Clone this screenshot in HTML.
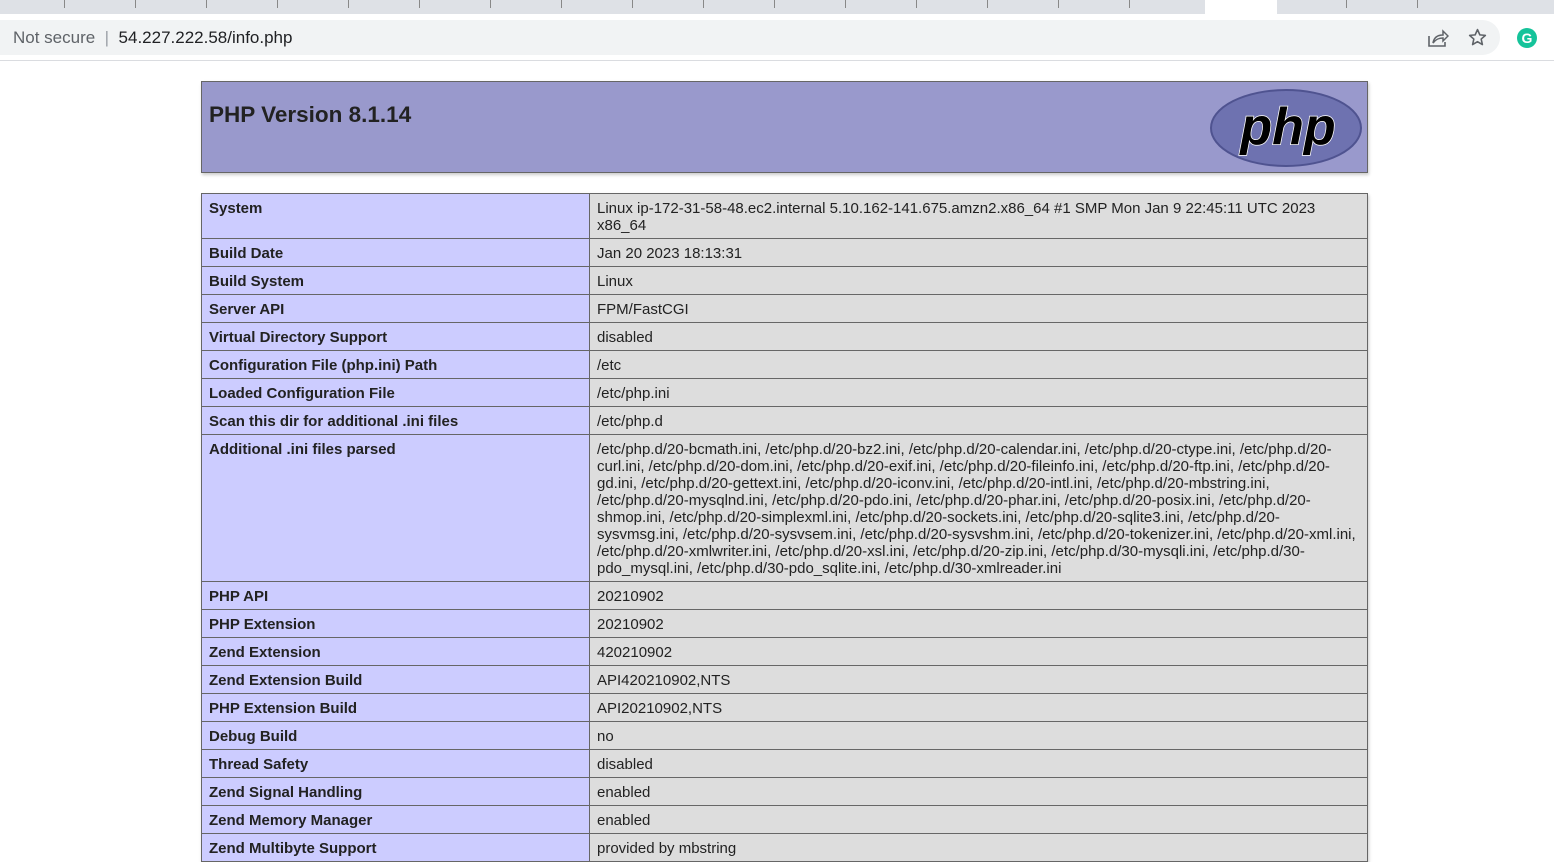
<!DOCTYPE html><html><head><style>
body{margin:0;width:1554px;height:838px;overflow:hidden;background:#fff;font-family:"Liberation Sans",Arial,sans-serif;position:relative}
.tabs{position:absolute;left:0;top:0;width:1554px;height:14px;background:#dee1e6}
.tab{position:absolute;top:0;width:1px;height:8px;background:#888}
.act{position:absolute;left:1205px;top:0;width:72px;height:14px;background:#fff}
.bar{position:absolute;left:0;top:14px;width:1554px;height:46px;background:#fff;border-bottom:1px solid #dadce0}
.omni{position:absolute;left:-20px;top:6px;width:1520px;height:35px;background:#f1f3f4;border-radius:18px}
.url{position:absolute;left:13px;top:14px;font-size:17px;color:#5f6368;line-height:20px}
.url b{font-weight:normal;color:#202124}
.hdr{position:absolute;left:201px;top:81px;width:1165px;height:90px;background:#99c;border:1px solid #666;box-shadow:1px 2px 3px #ccc}
.hdr h1{margin:0;position:absolute;left:7px;top:20px;font-size:22.5px;color:#222}
table{position:absolute;left:201px;top:193px;border-collapse:collapse;width:1167px;box-shadow:1px 2px 3px #ccc}
td{border:1px solid #666;font-size:15px;line-height:17px;padding:6px 7px 4px 7px;vertical-align:baseline;color:#222}
td.e{background:#ccf;width:373px;font-weight:bold}
td.v{background:#ddd}
</style></head><body>
<div class="tabs">
<div class="tab" style="left:64px"></div><div class="tab" style="left:135px"></div><div class="tab" style="left:206px"></div><div class="tab" style="left:277px"></div><div class="tab" style="left:348px"></div><div class="tab" style="left:419px"></div><div class="tab" style="left:490px"></div><div class="tab" style="left:561px"></div><div class="tab" style="left:632px"></div><div class="tab" style="left:703px"></div><div class="tab" style="left:774px"></div><div class="tab" style="left:845px"></div><div class="tab" style="left:916px"></div><div class="tab" style="left:987px"></div><div class="tab" style="left:1058px"></div><div class="tab" style="left:1129px"></div><div class="tab" style="left:1346px"></div><div class="tab" style="left:1417px"></div>
<div class="act"></div></div>
<div class="bar"><div class="omni"></div>
<div class="url">Not secure &nbsp;<span style="color:#9aa0a6">|</span>&nbsp; <b>54.227.222.58/info.php</b></div>
<svg style="position:absolute;left:1427px;top:14px" width="22" height="20" viewBox="0 0 22 20"><path d="M2 8v10h16v-4" fill="none" stroke="#5f6368" stroke-width="1.6"/><path d="M6 15c1-6 5-8 10-8V3l5 5-5 5V10c-4 0-7 1-10 5z" fill="none" stroke="#5f6368" stroke-width="1.5"/></svg>
<svg style="position:absolute;left:1467px;top:13px" width="21" height="21" viewBox="0 0 24 24"><path d="M12 3l2.7 6 6.3.6-4.8 4.2 1.4 6.3L12 16.8 6.4 20.1l1.4-6.3L3 9.6 9.3 9z" fill="none" stroke="#5f6368" stroke-width="1.8" stroke-linejoin="round"/></svg>
<div style="position:absolute;left:1517px;top:14px;width:20px;height:20px;border-radius:50%;background:#15c39a;color:#fff;font-size:14px;font-weight:bold;text-align:center;line-height:20px">G</div>
</div>
<div class="hdr"><h1>PHP Version 8.1.14</h1>
<svg style="position:absolute;left:1008px;top:5px" width="152" height="80" viewBox="0 0 152 80"><ellipse cx="76" cy="41" rx="75" ry="38" fill="#6e72b0" stroke="#4f5390" stroke-width="2"/><text x="78" y="57" text-anchor="middle" font-family="Liberation Sans,sans-serif" font-style="italic" font-weight="bold" font-size="52" fill="#000" stroke="#fff" stroke-width="1.5" paint-order="stroke">php</text></svg>
</div>
<table>
<tr><td class="e">System</td><td class="v">Linux ip-172-31-58-48.ec2.internal 5.10.162-141.675.amzn2.x86_64 #1 SMP Mon Jan 9 22:45:11 UTC 2023 x86_64</td></tr>
<tr><td class="e">Build Date</td><td class="v">Jan 20 2023 18:13:31</td></tr>
<tr><td class="e">Build System</td><td class="v">Linux</td></tr>
<tr><td class="e">Server API</td><td class="v">FPM/FastCGI</td></tr>
<tr><td class="e">Virtual Directory Support</td><td class="v">disabled</td></tr>
<tr><td class="e">Configuration File (php.ini) Path</td><td class="v">/etc</td></tr>
<tr><td class="e">Loaded Configuration File</td><td class="v">/etc/php.ini</td></tr>
<tr><td class="e">Scan this dir for additional .ini files</td><td class="v">/etc/php.d</td></tr>
<tr><td class="e">Additional .ini files parsed</td><td class="v">/etc/php.d/20-bcmath.ini, /etc/php.d/20-bz2.ini, /etc/php.d/20-calendar.ini, /etc/php.d/20-ctype.ini, /etc/php.d/20-curl.ini, /etc/php.d/20-dom.ini, /etc/php.d/20-exif.ini, /etc/php.d/20-fileinfo.ini, /etc/php.d/20-ftp.ini, /etc/php.d/20-gd.ini, /etc/php.d/20-gettext.ini, /etc/php.d/20-iconv.ini, /etc/php.d/20-intl.ini, /etc/php.d/20-mbstring.ini, /etc/php.d/20-mysqlnd.ini, /etc/php.d/20-pdo.ini, /etc/php.d/20-phar.ini, /etc/php.d/20-posix.ini, /etc/php.d/20-shmop.ini, /etc/php.d/20-simplexml.ini, /etc/php.d/20-sockets.ini, /etc/php.d/20-sqlite3.ini, /etc/php.d/20-sysvmsg.ini, /etc/php.d/20-sysvsem.ini, /etc/php.d/20-sysvshm.ini, /etc/php.d/20-tokenizer.ini, /etc/php.d/20-xml.ini, /etc/php.d/20-xmlwriter.ini, /etc/php.d/20-xsl.ini, /etc/php.d/20-zip.ini, /etc/php.d/30-mysqli.ini, /etc/php.d/30-pdo_mysql.ini, /etc/php.d/30-pdo_sqlite.ini, /etc/php.d/30-xmlreader.ini</td></tr>
<tr><td class="e">PHP API</td><td class="v">20210902</td></tr>
<tr><td class="e">PHP Extension</td><td class="v">20210902</td></tr>
<tr><td class="e">Zend Extension</td><td class="v">420210902</td></tr>
<tr><td class="e">Zend Extension Build</td><td class="v">API420210902,NTS</td></tr>
<tr><td class="e">PHP Extension Build</td><td class="v">API20210902,NTS</td></tr>
<tr><td class="e">Debug Build</td><td class="v">no</td></tr>
<tr><td class="e">Thread Safety</td><td class="v">disabled</td></tr>
<tr><td class="e">Zend Signal Handling</td><td class="v">enabled</td></tr>
<tr><td class="e">Zend Memory Manager</td><td class="v">enabled</td></tr>
<tr><td class="e">Zend Multibyte Support</td><td class="v">provided by mbstring</td></tr>
</table>
</body></html>
